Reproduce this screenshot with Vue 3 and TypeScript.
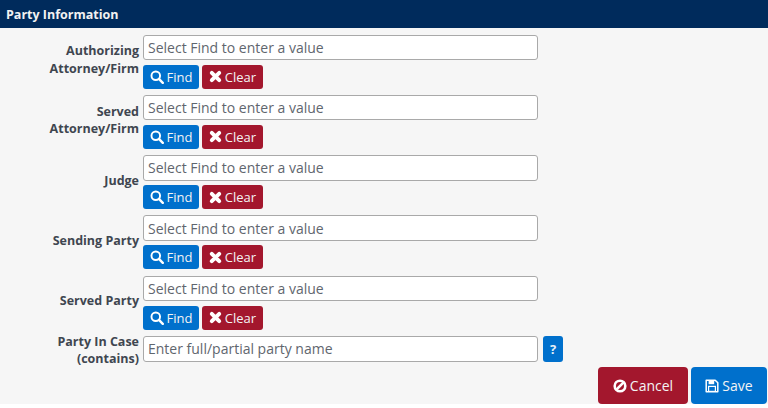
<script setup lang="ts">
interface Row { label: string[]; }
const rows: Row[] = [
  { label: ['Authorizing', 'Attorney/Firm'] },
  { label: ['Served', 'Attorney/Firm'] },
  { label: ['Judge'] },
  { label: ['Sending Party'] },
  { label: ['Served Party'] },
];
</script>

<template>
  <div class="page">
    <div class="header">Party Information</div>
    <div class="form">
      <div v-for="(r, i) in rows" :key="i" class="row">
        <div class="label"><span v-for="l in r.label" :key="l">{{ l }}</span></div>
        <div class="field">
          <input class="input" placeholder="Select Find to enter a value" readonly />
          <div class="btns">
            <button class="btn blue">
              <svg class="ic" viewBox="0 0 16 16" width="14" height="14"><circle cx="6.6" cy="6.6" r="4.9" fill="none" stroke="#fff" stroke-width="2.2"/><path d="M10.2 10.2 14.6 14.6" stroke="#fff" stroke-width="2.8" stroke-linecap="round"/></svg>
              Find
            </button>
            <button class="btn red">
              <svg class="ic" viewBox="0 0 14 14" width="13" height="13"><path d="M3 3 11 11M11 3 3 11" stroke="#fff" stroke-width="4.2" stroke-linecap="round"/></svg>
              Clear
            </button>
          </div>
        </div>
      </div>
      <div class="row last">
        <div class="label"><span>Party In Case</span><span>(contains)</span></div>
        <div class="field inline">
          <input class="input" placeholder="Enter full/partial party name" />
          <button class="help">?</button>
        </div>
      </div>
    </div>
    <div class="actions">
      <button class="btn big red">
        <svg viewBox="0 0 14 14" width="14" height="14"><circle cx="7" cy="7" r="5.3" fill="none" stroke="#fff" stroke-width="2.6"/><path d="M3.4 10.6 10.6 3.4" stroke="#fff" stroke-width="2.6"/></svg>
        Cancel
      </button>
      <button class="btn big blue">
        <svg viewBox="0 0 14 14" width="14" height="14"><path d="M1.2 1.2H10.2L12.8 3.8V12.8H1.2Z" fill="none" stroke="#fff" stroke-width="1.5" stroke-linejoin="round"/><rect x="3.6" y="1.6" width="5.6" height="3.6" fill="#fff"/><rect x="3.6" y="7.4" width="6.8" height="5" fill="none" stroke="#fff" stroke-width="1.2"/></svg>
        Save
      </button>
    </div>
  </div>
</template>

<style>
html, body { margin: 0; background: #fff; }
</style>

<style scoped>
.page {
  width: 768px;
  height: 404px;
  background: #f6f6f6;
  font-family: "Open Sans", "Noto Sans", sans-serif;
  overflow: hidden;
}
.header {
  height: 28px;
  line-height: 29px;
  padding-left: 6px;
  background: #002b5c;
  color: #f2f2f2;
  font-size: 12.5px;
  font-weight: 700;
}
.form {
  padding-top: 6.6px;
}
.row {
  display: flex;
  height: 60.3px;
  gap: 4px;
}
.row.last {
  height: 30.4px;
}
.label {
  width: 139px;
  display: flex;
  flex-direction: column;
  justify-content: center;
  align-items: flex-end;
  color: #3f4650;
  font-size: 12.5px;
  font-weight: 700;
  line-height: 17.5px;
  padding-bottom: 10px;
  box-sizing: border-box;
}
.row.last .label {
  padding-bottom: 2px;
}
.field {
  width: 395px;
}
.field.inline {
  display: flex;
  width: auto;
  gap: 5px;
}
.input {
  display: block;
  width: 395px;
  height: 25.5px;
  box-sizing: border-box;
  padding: 0 4px;
  border: 1px solid #a9a9a9;
  border-radius: 3px;
  background: #fff;
  font-family: inherit;
  font-size: 14px;
  outline: none;
}
.input::placeholder {
  color: #5f666e;
  opacity: 1;
}
.btns {
  display: flex;
  gap: 3px;
  margin-top: 4.5px;
}
.btn {
  display: flex;
  align-items: center;
  justify-content: center;
  gap: 3px;
  height: 24px;
  padding: 0;
  border: 0;
  border-radius: 3px;
  color: #f4f4f4;
  font-family: inherit;
  font-size: 13px;
  box-sizing: border-box;
}
.btn.blue { background: #0070cc; width: 56px; }
.btn.red { background: #a3172d; width: 61px; }
.help {
  width: 20px;
  height: 25.5px;
  padding: 0;
  border: 0;
  border-radius: 3px;
  background: #0070cc;
  color: #e8f0f8;
  font-family: inherit;
  font-size: 13px;
  font-weight: 700;
}
.actions {
  display: flex;
  justify-content: flex-end;
  gap: 3px;
  margin-top: 1px;
  padding-right: 1px;
}
.btn.big {
  height: 36.5px;
  font-size: 14px;
  border-radius: 4px;
}
.btn.big.red { width: 90px; }
.btn.big.blue { width: 76px; }
</style>
